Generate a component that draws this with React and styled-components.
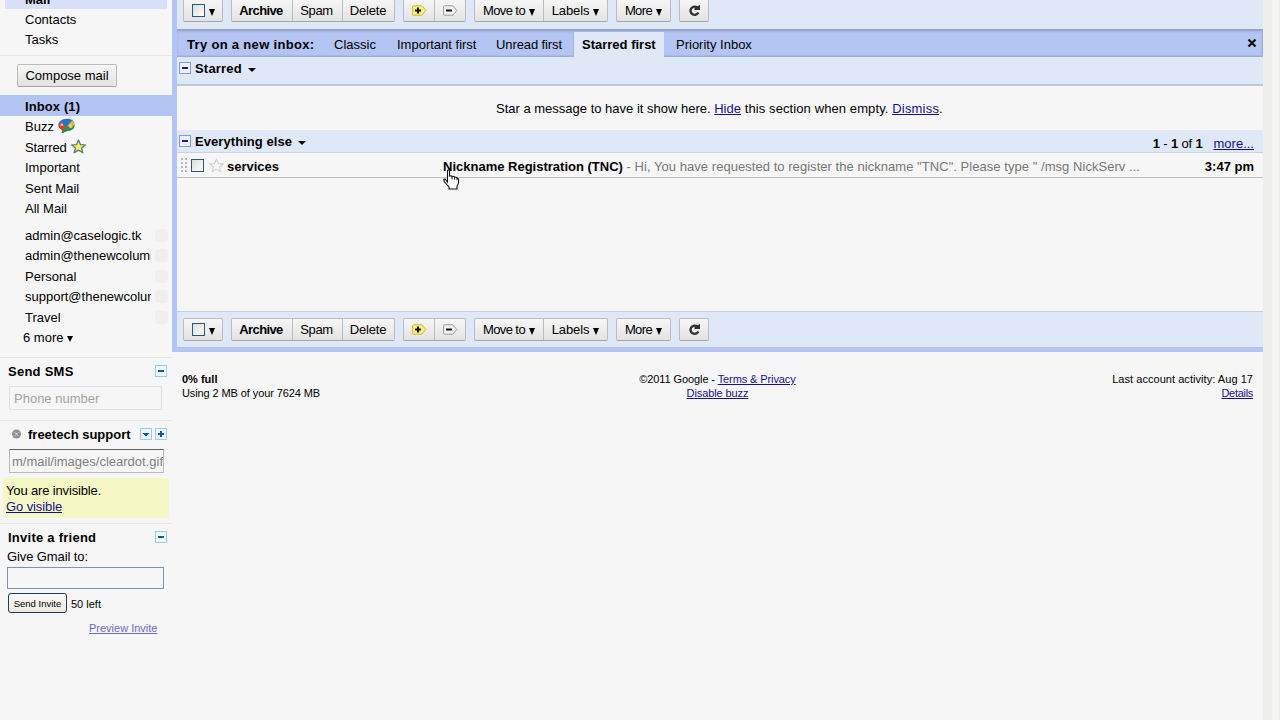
import React from "react";
import styled, { createGlobalStyle, css } from "styled-components";

const COLORS = {
  page: "#f6f6f6",
  frame: "#b5c5f3",
  bar: "#dfe8f6",
  line: "#e4e6ea",
  link: "#15108a",
};

const GlobalStyle = createGlobalStyle`
  * {
    box-sizing: border-box;
  }
  body {
    margin: 0;
    background: ${COLORS.page};
    color: #000;
    font: 13px/20px "Liberation Sans", Arial, sans-serif;
    overflow: hidden;
  }
`;

const Page = styled.div`
  display: flex;
  width: 1280px;
  height: 720px;
  overflow: hidden;
`;

const Text = styled.span`
  letter-spacing: ${(props) => props.$ls || 0}px;
  font-weight: ${(props) => (props.$bold ? "bold" : "normal")};
  white-space: pre;
`;

const Link = styled.a`
  color: ${(props) => props.$color || COLORS.link};
  letter-spacing: ${(props) => props.$ls || 0}px;
  text-decoration: underline;
  white-space: pre;
`;

/* Sidebar */

const Sidebar = styled.aside`
  width: 172px;
  flex: none;
`;

const MailItem = styled.div`
  height: 9px;
  margin: 0 5px;
  padding-left: 20px;
  display: flex;
  align-items: flex-end;
  overflow: hidden;
  background: #d8e1f9;
  font-weight: bold;
  line-height: 20px;

  span {
    margin-bottom: -1px;
  }
`;

const NavItem = styled.div`
  height: ${(props) => props.$h || 20}px;
  line-height: 20px;
  padding-top: ${(props) => props.$top || 0}px;
  padding-left: ${(props) => props.$left || 25}px;
  display: flex;
  align-items: center;
  background: ${(props) => (props.$active ? COLORS.frame : "transparent")};
  font-weight: ${(props) => (props.$active ? "bold" : "normal")};

  svg {
    margin: -2px 0 0 4px;
  }
`;

const TopNav = styled.div`
  height: 47px;
  padding-top: 1px;
  border-bottom: 1px solid ${COLORS.line};
`;

const buttonFace = css`
  border: 1px solid #bcbcbc;
  border-bottom-color: #a6a6a6;
  background: linear-gradient(#f6f6f6, #e3e3e3);
`;

const ComposeButton = styled.button`
  ${buttonFace}
  display: block;
  width: 100px;
  height: 23px;
  margin: 8px 0 8px 17px;
  padding: 0;
  border-radius: 2px;
  font: inherit;
  line-height: 21px;
  color: #000;
`;

const Folders = styled.div`
  padding-bottom: 6px;
`;

const Labels = styled.div`
  height: 132px;
`;

const LabelName = styled.div`
  width: 126px;
  overflow: hidden;
  white-space: nowrap;
`;

const Swatch = styled.i`
  width: 13px;
  height: 13px;
  margin: -1px 0 0 4px;
  border-radius: 4px;
  background: #efefeb;
`;

const Gadget = styled.section`
  height: ${(props) => props.$h}px;
  border-top: 1px solid ${COLORS.line};
`;

const GadgetHeader = styled.div`
  display: flex;
  align-items: center;
  height: 26px;
  padding: 0 5px 0 8px;
  gap: 3px;
`;

const GadgetTitle = styled.h2`
  flex: 1;
  margin: 2px 0 0;
  font-size: 13px;
  letter-spacing: ${(props) => props.$ls || 0}px;
  white-space: nowrap;
`;

const PhoneField = styled.div`
  width: 153px;
  height: 24px;
  margin: 2px 0 0 9px;
  padding-left: 4px;
  border: 1px solid #dde0ea;
  line-height: 23px;
  color: #a3a3a3;
`;

const StatusField = styled.div`
  display: flex;
  justify-content: flex-end;
  width: 155px;
  height: 24px;
  margin: 2px 0 0 9px;
  overflow: hidden;
  border: 1px solid #b9b9bf;
  border-top-color: #5e5e62;
  line-height: 23px;
  color: #808080;
`;

const Notice = styled.div`
  width: 166px;
  height: 40px;
  margin: 5px 0 0 3px;
  padding: 5px 3px;
  background: #f5f8c4;
  line-height: 16px;
`;

const InviteForm = styled.div`
  margin-top: -1px;
  padding-left: 7px;
  line-height: 16px;
`;

const InviteField = styled.div`
  width: 157px;
  height: 22px;
  margin-top: 2px;
  border: 1px solid #7f95b0;
`;

const InviteRow = styled.div`
  display: flex;
  align-items: center;
  gap: 4px;
  margin: 4px 0 0 1px;
  height: 20px;
  font-size: 11px;

  span {
    padding-top: 2px;
  }
`;

const InviteButton = styled.button`
  width: 59px;
  height: 20px;
  padding: 0;
  border: 1px solid #1d3a5c;
  border-radius: 3px;
  background: linear-gradient(#fbfbf9, #eceae2);
  font: 9.5px "Liberation Sans", Arial, sans-serif;
  color: #000;
`;

const PreviewRow = styled.div`
  margin: 7px 0 0 82px;
  font-size: 11px;
`;

/* Mail area */

const Main = styled.main`
  width: 1091px;
  flex: none;
`;

const Frame = styled.div`
  border-left: 5px solid ${COLORS.frame};
  border-bottom: 5px solid ${COLORS.frame};
`;

const Toolbar = styled.div`
  display: flex;
  align-items: flex-start;
  gap: 8px;
  height: ${(props) => (props.$bottom ? 36 : 29)}px;
  padding: ${(props) => (props.$bottom ? "6px 0 0 6px" : "0 0 0 6px")};
  border-top: ${(props) => (props.$bottom ? "1px solid #c5cfe0" : "none")};
  background: ${COLORS.bar};
`;

const ButtonGroup = styled.div`
  ${buttonFace}
  display: flex;
  height: 23px;
  margin-top: ${(props) => (props.$raised ? -1 : 0)}px;
  border-radius: 2px;
`;

const ToolButton = styled.button`
  display: flex;
  align-items: center;
  justify-content: center;
  gap: 4px;
  width: ${(props) => props.$w}px;
  padding: 0 ${(props) => props.$inset || 0}px 0 0;
  border: 0;
  border-left: ${(props) => (props.$divided ? "1px solid #bcbcbc" : "0")};
  background: none;
  font: inherit;
  font-weight: ${(props) => (props.$bold ? "bold" : "normal")};
  letter-spacing: ${(props) => props.$ls || 0}px;
  color: #000;
  white-space: nowrap;
`;

const Checkbox = styled.i`
  width: 13px;
  height: 13px;
  border: 1px solid #27597f;
  background: linear-gradient(135deg, #dcdcd8, #fdfdfd) padding-box;
`;

const RowCheckbox = styled(Checkbox)`
  margin: -2px 5px 0 4px;
`;

const Caret = styled.i`
  width: 0;
  height: 0;
  margin-top: ${(props) => props.$drop || 0}px;
  border: ${(props) => props.$size || 4}px solid transparent;
  border-top: ${(props) => props.$tall || 7}px solid #000;
  border-bottom: 0;
`;

const TabBar = styled.div`
  display: flex;
  align-items: stretch;
  height: 28px;
  padding-left: 1px;
  border-top: 2px solid #97a6cb;
  border-bottom: 1px solid #9dadd6;
  border-right: 1px solid #9dadd6;
  background: ${COLORS.frame};
  box-shadow: inset 0 1px 2px #a3b2dd, inset 0 -1px 1px #a9b8e4;
  line-height: 28px;
`;

const Tab = styled.div`
  width: ${(props) => props.$w}px;
  padding-left: ${(props) => props.$left || 0}px;
  letter-spacing: ${(props) => props.$ls || 0}px;
  font-weight: ${(props) => (props.$bold ? "bold" : "normal")};
  white-space: nowrap;
`;

const ActiveTab = styled(Tab)`
  margin: 1px 0 -1px;
  line-height: 26px;
  border-left: 1px solid #a3b2dd;
  background: ${COLORS.bar};
`;

const CloseTab = styled.div`
  margin-left: auto;
  padding: 7px 5px 0 0;
  line-height: 0;
`;

const SectionBar = styled.div`
  display: flex;
  align-items: center;
  height: ${(props) => props.$h}px;
  padding: ${(props) => props.$pad};
  border-bottom: ${(props) => props.$line};
  background: ${COLORS.bar};
`;

const SectionTitle = styled.div`
  display: flex;
  align-items: center;
  gap: 6px;
  padding: 2px 0 0 4px;
  font-weight: bold;
  letter-spacing: ${(props) => props.$ls || 0}px;
`;

const Count = styled.div`
  display: flex;
  gap: 11px;
  margin-left: auto;
  padding-top: 6px;
`;

const EmptyMessage = styled.div`
  height: 44px;
  padding-left: 319px;
  line-height: 45px;
  white-space: pre;
`;

const MailRow = styled.div`
  display: flex;
  align-items: center;
  height: 25px;
  padding: 3px 9px 0 4px;
  border-bottom: 1px solid #bdbdbd;

  > svg {
    margin-top: -3px;
  }
`;

const Sender = styled.div`
  width: 219px;
  padding-left: 3px;
  flex: none;
  font-weight: bold;
`;

const Snippet = styled.div`
  position: relative;
  flex: 1;
  color: #777;
  white-space: pre;

  b {
    color: #000;
  }
`;

const PointerLayer = styled.div`
  position: absolute;
  left: 0;
  top: 12px;
  line-height: 0;
`;

const EmptyArea = styled.div`
  height: 133px;
`;

const Footer = styled.footer`
  display: grid;
  grid-template-columns: 1fr 1fr 1fr;
  padding: 20px 10px 0 10px;
  font-size: 11px;
  line-height: 14px;
`;

const FooterCell = styled.div`
  text-align: ${(props) => props.$align};
`;

const Gutter = styled.div`
  flex: 1;
  border-left: 9px solid #eeeeec;
  border-right: 1px solid #ecece0;
  background: #f5f5f4;
`;

/* Icons */

const ToggleIcon = ({ kind, dark }) => (
  <svg width="12" height="12" viewBox="0 0 12 12" shapeRendering="crispEdges">
    <rect x="0.5" y="0.5" width="11" height="11" fill={dark ? "#e9effb" : "#eef8ff"} stroke={dark ? "#8a99dc" : "#9ccaf0"} />
    {kind === "menu" ? (
      <path d="M3 5h6v1H8v1H7v1H5V7H4V6H3z" fill="#1453a8" />
    ) : (
      <rect x="3" y="5" width="6" height="2" fill={dark ? "#1c1c90" : "#1453a8"} />
    )}
    {kind === "plus" && <rect x="5" y="3" width="2" height="6" fill="#1453a8" />}
  </svg>
);

const TagIcon = ({ plus }) => (
  <svg width="15" height="11" viewBox="0 0 15 11">
    <path
      d="M1.5 0.8h8.3l4 4.7-4 4.7H1.5q-.9 0-.9-.9V1.7q0-.9.9-.9z"
      fill={plus ? "#fbf27a" : "#f2f2f2"}
      stroke={plus ? "#c9b53a" : "#999"}
    />
    <path d={plus ? "M3 4.5h2v-2h2v2h2v2H7v2H5v-2H3z" : "M3 4.5h6v2H3z"} fill="#111" />
  </svg>
);

const RefreshIcon = () => (
  <svg width="13" height="13" viewBox="0 0 13 13">
    <path d="M9.300 3.700A4.100 4.100 0 1 0 10.300 8.500" fill="none" stroke="#333" strokeWidth="2.400" />
    <path d="M12 .8v5.200H6.500V4.300z" fill="#333" />
  </svg>
);

const BuzzIcon = () => (
  <svg width="17" height="16" viewBox="0 0 17 16">
    <path d="M8.500.8C13 .3 16.500 2.500 16.500 7c0 3.600-3 5.500-6.500 5.700-2 .1-4.800 2.400-6 2.300-1-.1.8-2.200 0-3C1.500 10.500.3 9 .5 6.500.8 3 4 1.200 8.500.8z" fill="#2b73c9" />
    <path d="M.6 5.500 4 4.500 8 9.500 5.500 12.700 4 12C1.500 10.500.2 8.500.6 5.500z" fill="#d8402a" />
    <path d="M8 9.500 14 2.700c2 1.300 2.500 3 2.400 4.800L10 11z" fill="#f3b62c" />
    <path d="M6 12.700 8 8.500l8.400-1.300c.1 3.800-3 5.400-6.400 5.500-2 .1-4.800 2.400-6 2.300-.8-.1.500-1.500.2-2.500z" fill="#2d8f4c" />
    <circle cx="3.800" cy="6.700" r="1.300" fill="#f6c6a0" />
    <circle cx="12.700" cy="8" r="2" fill="#f8cf55" />
  </svg>
);

const STAR = "M7.500 1l1.900 4.600 4.900.3-3.800 3.100 1.300 4.800-4.300-2.700-4.300 2.700 1.300-4.800L.7 5.900l4.900-.3z";

const StarIcon = ({ on }) => (
  <svg width="15" height="15" viewBox="0 0 15 15">
    <path d={STAR} fill={on ? "#f8ee62" : "#f8f8f8"} stroke={on ? "#587a80" : "#d2d2d2"} strokeWidth={on ? 1.3 : 1.1} strokeLinejoin="round" />
  </svg>
);

const GripIcon = () => (
  <svg width="6" height="14" viewBox="0 0 6 14" fill="#b5b5b5" shapeRendering="crispEdges">
    {[0, 4, 8, 12].map((y) => (
      <path key={y} d={`M0 ${y}h2v2H0zM4 ${y}h2v2H4z`} />
    ))}
  </svg>
);

const StatusIcon = () => (
  <svg width="17" height="10" viewBox="-4 0 17 10">
    <circle cx="4.500" cy="5" r="4.500" fill="#929292" />
    <path d="M2.800 3.300l3.400 3.400M6.200 3.300 2.800 6.700" stroke="#ddd" />
  </svg>
);

const CloseIcon = () => (
  <svg width="10" height="10" viewBox="0 0 10 10">
    <path d="M1.500 1.500l7 7M8.500 1.500l-7 7" stroke="#111" strokeWidth="2.200" />
  </svg>
);

const HandPointer = () => (
  <svg width="17" height="22" viewBox="0 0 17 22">
    <path
      d="M4.500 13V1.500q1-1.200 2 0V7q1.200-.8 2.500.5 1.400-.7 2.500.7 1.500-.6 2.500 1 1.500-.4 1.500 1.500V14l-1.500 3.500v2.500h-8v-2L1.500 13 .7 10.500q1.300-1 2.300.5z"
      fill="#fff"
      stroke="#111"
      strokeWidth="1.100"
    />
    <path d="M9 7.500v3M11.500 8.200v2.300M14 9.200v2" stroke="#111" />
  </svg>
);

const MailToolbar = ({ bottom }) => (
  <Toolbar $bottom={bottom}>
    <ButtonGroup $raised={!bottom}>
      <ToolButton $w={38}>
        <Checkbox />
        <Caret $size={3.5} $drop={3} />
      </ToolButton>
    </ButtonGroup>
    <ButtonGroup $raised={!bottom}>
      <ToolButton $w={60} $bold $ls={-0.6} $inset={2}>Archive</ToolButton>
      <ToolButton $w={50} $divided $ls={-0.4} $inset={2}>Spam</ToolButton>
      <ToolButton $w={52} $divided $ls={-0.2} $inset={1}>Delete</ToolButton>
    </ButtonGroup>
    <ButtonGroup $raised={!bottom}>
      <ToolButton $w={30}><TagIcon plus /></ToolButton>
      <ToolButton $w={31} $divided><TagIcon /></ToolButton>
    </ButtonGroup>
    <ButtonGroup $raised={!bottom}>
      <ToolButton $w={68} $ls={-0.6}>Move to<Caret $size={3.5} $drop={3} /></ToolButton>
      <ToolButton $w={64} $divided $ls={-0.1}>Labels<Caret $size={3.5} $drop={3} /></ToolButton>
    </ButtonGroup>
    <ButtonGroup $raised={!bottom}>
      <ToolButton $w={53} $ls={-0.6}>More<Caret $size={3.5} $drop={3} /></ToolButton>
    </ButtonGroup>
    <ButtonGroup $raised={!bottom}>
      <ToolButton $w={28}><RefreshIcon /></ToolButton>
    </ButtonGroup>
  </Toolbar>
);

const labels = [
  { name: "admin@caselogic.tk", h: 21 },
  { name: "admin@thenewcolumbia", h: 20 },
  { name: "Personal", h: 21 },
  { name: "support@thenewcolumbia", h: 20 },
  { name: "Travel", h: 21 },
];

const App = () => (
  <Page>
    <GlobalStyle />
    <Sidebar>
      <MailItem><span>Mail</span></MailItem>
      <TopNav>
        <NavItem>Contacts</NavItem>
        <NavItem>Tasks</NavItem>
      </TopNav>
      <ComposeButton>Compose mail</ComposeButton>
      <Folders>
        <NavItem $active $h={21} $top={3}><Text $bold $ls={0.1}>Inbox (1)</Text></NavItem>
        <NavItem $h={21}>Buzz<BuzzIcon /></NavItem>
        <NavItem $h={21}><Text $ls={-0.15}>Starred</Text><StarIcon on /></NavItem>
        <NavItem>Important</NavItem>
        <NavItem $h={21} $top={1}>Sent Mail</NavItem>
        <NavItem>All Mail</NavItem>
      </Folders>
      <Labels>
        {labels.map((label) => (
          <NavItem key={label.name} $h={label.h}>
            <LabelName>{label.name}</LabelName>
            <Swatch />
          </NavItem>
        ))}
        <NavItem $left={23} $h={20}>
          <Text>6 more </Text>
          <Caret $size={3} $tall={6} $drop={2} />
        </NavItem>
      </Labels>
      <Gadget $h={63}>
        <GadgetHeader>
          <GadgetTitle $ls={0.25}>Send SMS</GadgetTitle>
          <ToggleIcon />
        </GadgetHeader>
        <PhoneField>Phone number</PhoneField>
      </Gadget>
      <Gadget $h={103}>
        <GadgetHeader>
          <StatusIcon />
          <GadgetTitle>freetech support</GadgetTitle>
          <ToggleIcon kind="menu" />
          <ToggleIcon kind="plus" />
        </GadgetHeader>
        <StatusField><Text>m/mail/images/cleardot.gif</Text></StatusField>
        <Notice>
          <Text $ls={-0.15}>You are invisible.</Text>
          <br />
          <Link $ls={-0.1}>Go visible</Link>
        </Notice>
      </Gadget>
      <Gadget $h={120}>
        <GadgetHeader>
          <GadgetTitle $ls={0.25}>Invite a friend</GadgetTitle>
          <ToggleIcon />
        </GadgetHeader>
        <InviteForm>
          <Text $ls={-0.1}>Give Gmail to:</Text>
          <InviteField />
          <InviteRow>
            <InviteButton>Send Invite</InviteButton>
            <Text>50 left</Text>
          </InviteRow>
          <PreviewRow><Link $color="#6a6abf">Preview Invite</Link></PreviewRow>
        </InviteForm>
      </Gadget>
    </Sidebar>
    <Main>
      <Frame>
        <MailToolbar />
        <TabBar>
          <Tab $w={156} $left={9} $bold $ls={0.32}>Try on a new inbox:</Tab>
          <Tab $w={63}>Classic</Tab>
          <Tab $w={99}>Important first</Tab>
          <Tab $w={77} $ls={-0.1}>Unread first</Tab>
          <ActiveTab $w={91} $left={8} $bold>Starred first</ActiveTab>
          <Tab $w={120} $left={12}>Priority Inbox</Tab>
          <CloseTab><CloseIcon /></CloseTab>
        </TabBar>
        <SectionBar $h={29} $pad="0 0 5px 2px" $line="2px solid #c0c6d6">
          <ToggleIcon dark />
          <SectionTitle $ls={0.2}>Starred<Caret $tall={4} $drop={1} /></SectionTitle>
        </SectionBar>
        <EmptyMessage>
          <Text>Star a message to have it show here. </Text>
          <Link>Hide</Link>
          <Text $ls={0.1}> this section when empty. </Text>
          <Link $ls={0.2}>Dismiss</Link>.
        </EmptyMessage>
        <SectionBar $h={23} $pad="0 9px 0 2px" $line="1px solid #ccd3e0">
          <ToggleIcon dark />
          <SectionTitle $ls={0.07}>Everything else<Caret $tall={4} $drop={1} /></SectionTitle>
          <Count>
            <Text $ls={-0.15}><b>1</b> - <b>1</b> of <b>1</b></Text>
            <Link>more...</Link>
          </Count>
        </SectionBar>
        <MailRow>
          <GripIcon />
          <RowCheckbox />
          <StarIcon />
          <Sender>services</Sender>
          <Snippet>
            <b>Nickname Registration (TNC)</b>
            <Text $ls={0.045}> - Hi, You have requested to register the nickname "TNC". Please type " /msg NickServ ...</Text>
            <PointerLayer><HandPointer /></PointerLayer>
          </Snippet>
          <Text $bold>3:47 pm</Text>
        </MailRow>
        <EmptyArea />
        <MailToolbar bottom />
      </Frame>
      <Footer>
        <FooterCell $align="left">
          <b>0% full</b>
          <br />
          <Text $ls={-0.1}>Using 2 MB of your 7624 MB</Text>
        </FooterCell>
        <FooterCell $align="center">
          <Text $ls={-0.1}>©2011 Google - </Text>
          <Link $ls={-0.1}>Terms &amp; Privacy</Link>
          <br />
          <Link $ls={-0.1}>Disable buzz</Link>
        </FooterCell>
        <FooterCell $align="right">
          <Text $ls={0.05}>Last account activity: Aug 17</Text>
          <br />
          <Link $ls={-0.3}>Details</Link>
        </FooterCell>
      </Footer>
    </Main>
    <Gutter />
  </Page>
);

export default App;
